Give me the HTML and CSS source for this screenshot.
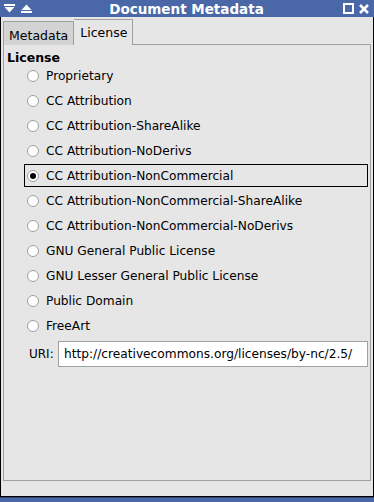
FILE: index.html
```html
<!DOCTYPE html>
<html>
<head>
<meta charset="utf-8">
<link rel="stylesheet" href="styles.css">
</head>
<body>
<div class="window">
  <div class="titlebar">
    <div class="tb-left">
      <svg width="11" height="9" viewBox="0 0 11 9"><rect x="0" y="0" width="11" height="2" fill="#fff"/><path d="M0.5 3h10L5.5 8.5z" fill="#fff"/></svg>
      <svg width="11" height="9" viewBox="0 0 11 9"><path d="M0.5 6h10L5.5 0.5z" fill="#fff"/><rect x="0" y="7" width="11" height="2" fill="#fff"/></svg>
    </div>
    <div class="title">Document Metadata</div>
    <div class="tb-right">
      <svg width="11" height="11" viewBox="0 0 11 11"><rect x="1" y="1" width="9" height="9" fill="none" stroke="#fff" stroke-width="2"/></svg>
      <svg width="10" height="10" viewBox="0 0 10 10"><path d="M1 1L9 9M9 1L1 9" stroke="#fff" stroke-width="2.6"/></svg>
    </div>
  </div>
  <div class="body">
    <div class="tabs">
      <div class="tab">Metadata</div>
      <div class="tab active">License</div>
    </div>
    <div class="panel">
      <div class="heading">License</div>
      <div class="options">
        <div class="opt"><span class="radio"></span>Proprietary</div>
        <div class="opt"><span class="radio"></span>CC Attribution</div>
        <div class="opt"><span class="radio"></span>CC Attribution-ShareAlike</div>
        <div class="opt"><span class="radio"></span>CC Attribution-NoDerivs</div>
        <div class="opt selected"><span class="radio checked"></span>CC Attribution-NonCommercial</div>
        <div class="opt"><span class="radio"></span>CC Attribution-NonCommercial-ShareAlike</div>
        <div class="opt"><span class="radio"></span>CC Attribution-NonCommercial-NoDerivs</div>
        <div class="opt"><span class="radio"></span>GNU General Public License</div>
        <div class="opt"><span class="radio"></span>GNU Lesser General Public License</div>
        <div class="opt"><span class="radio"></span>Public Domain</div>
        <div class="opt"><span class="radio"></span>FreeArt</div>
      </div>
      <div class="uri-row">
        <span class="uri-label">URI:</span>
        <div class="uri-input">http://creativecommons.org/licenses/by-nc/2.5/</div>
      </div>
    </div>
  </div>
  <div class="bottombar"></div>
</div>
</body>
</html>
```
FILE: styles.css
```css
html, body {
  margin: 0;
  padding: 0;
}
body {
  font-family: "DejaVu Sans", sans-serif;
  font-size: 12px;
  color: #000;
  background: #e6e6e6;
}
.window {
  width: 374px;
  height: 502px;
  display: flex;
  flex-direction: column;
  box-sizing: border-box;
}
.titlebar {
  height: 17px;
  background: #4a67a8;
  display: flex;
  align-items: center;
  padding: 0 4px;
  color: #fff;
}
.tb-left {
  display: flex;
  gap: 6px;
  width: 60px;
}
.title {
  flex: 1;
  text-align: center;
  font-weight: bold;
  font-size: 13.5px;
}
.tb-right {
  display: flex;
  gap: 5px;
  width: 60px;
  justify-content: flex-end;
  align-items: center;
  padding-right: 1px;
}
.body {
  flex: 1;
  border-left: 1px solid #000;
  border-right: 1px solid #000;
  border-bottom: 1px solid #000;
  padding: 3px 2px 0 2px;
  display: flex;
  flex-direction: column;
}
.tabs {
  display: flex;
  align-items: flex-end;
  height: 25px;
  position: relative;
  z-index: 1;
}
.tab {
  height: 23px;
  line-height: 27px;
  padding: 0 5px 0 5px;
  background: #d3d3d3;
  border: 1px solid #a0a0a0;
  border-bottom: none;
  font-size: 12.5px;
  box-sizing: content-box;
  overflow: hidden;
}
.tab.active {
  height: 25px;
  line-height: 26px;
  background: #e6e6e6;
  border-left: none;
  padding: 0 5px 0 6px;
}
.panel {
  height: 437px;
  box-sizing: border-box;
  border: 1px solid #a0a0a0;
  margin-top: -1px;
  padding: 4px 0 0 3px;
  display: flex;
  flex-direction: column;
}
.heading {
  font-weight: bold;
  font-size: 12.5px;
  height: 14px;
  line-height: 17px;
}
.options {
  display: flex;
  flex-direction: column;
  padding-left: 17px;
  padding-right: 2px;
}
.opt {
  height: 25px;
  display: flex;
  align-items: center;
  font-size: 12.2px;
  border: 1px solid transparent;
  box-sizing: border-box;
  padding-left: 2px;
}
.opt.selected {
  border-color: #000;
  height: 23px;
  margin: 1px 0;
}
.radio {
  width: 10px;
  height: 10px;
  border: 1px solid #a0a0a0;
  border-radius: 50%;
  background: #fff;
  margin-right: 7px;
  position: relative;
}
.radio.checked::after {
  content: "";
  position: absolute;
  left: 2px;
  top: 2px;
  width: 6px;
  height: 6px;
  border-radius: 50%;
  background: #000;
}
.uri-row {
  display: flex;
  align-items: center;
  margin-top: 3px;
  padding-left: 22px;
}
.uri-label {
  font-size: 12px;
  width: 29px;
}
.uri-input {
  width: 310px;
  height: 26px;
  line-height: 24px;
  border: 1px solid #a0a0a0;
  background: #fff;
  padding-left: 5px;
  box-sizing: border-box;
  font-size: 12.2px;
  white-space: nowrap;
  overflow: hidden;
}
.bottombar {
  height: 5px;
  background: #4a67a8;
  border-top: 1px solid #2d4478;
  box-sizing: border-box;
}
```
